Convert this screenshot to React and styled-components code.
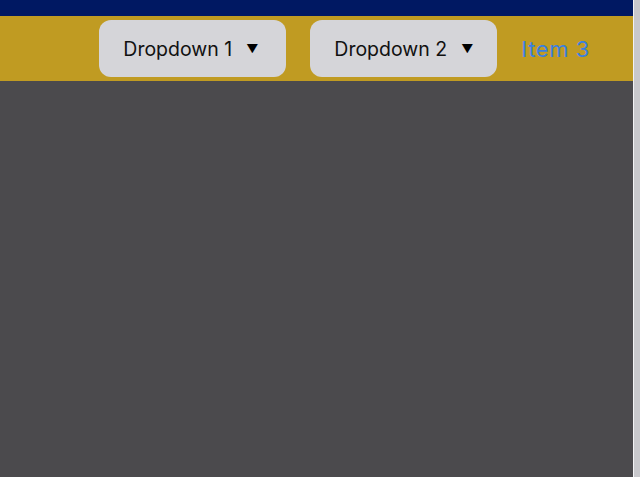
import React from 'react'
import styled, { createGlobalStyle } from 'styled-components'

const GlobalStyle = createGlobalStyle`
  html, body {
    margin: 0;
    padding: 0;
    height: 100%;
    background: #c8c8cc;
  }
  #root {
    height: 100%;
  }
`

const Page = styled.div`
  height: 100%;
  width: calc(100% - 7px);
  border-right: 1px solid #f2f2f4;
  background-color: #4b4a4d;
  font-family: Inter, 'Noto Sans', sans-serif;
  display: flex;
  flex-direction: column;
`

const TopBar = styled.div`
  height: 16px;
  background-color: #001862;
`

const Nav = styled.nav`
  background-color: #c09b22;
  height: 65px;
  padding: 4px 43px 4px 0;
  box-sizing: border-box;
  display: flex;
  justify-content: flex-end;
  align-items: stretch;
  gap: 24px;
`

const DropdownButton = styled.button`
  font-family: inherit;
  font-size: 19.5px;
  color: #111;
  background-color: #d5d5d9;
  border: none;
  border-radius: 12px;
  height: 57px;
  width: 187px;
  padding: 0 0 0 24px;
  display: flex;
  align-items: center;
  cursor: pointer;
`

const Caret = styled.span`
  font-size: 12px;
  margin-left: 14px;
  color: #000;
`

const NavLink = styled.a`
  font-size: 22px;
  letter-spacing: 0.6px;
  color: #3a80e0;
  text-decoration: none;
  display: flex;
  align-items: center;
`

const App = () => {
  return (
    <>
      <GlobalStyle />
      <Page>
        <TopBar />
        <Nav>
          <DropdownButton>
            Dropdown 1<Caret>▼</Caret>
          </DropdownButton>
          <DropdownButton>
            Dropdown 2<Caret>▼</Caret>
          </DropdownButton>
          <NavLink href="#">Item 3</NavLink>
        </Nav>
      </Page>
    </>
  )
}

export default App
